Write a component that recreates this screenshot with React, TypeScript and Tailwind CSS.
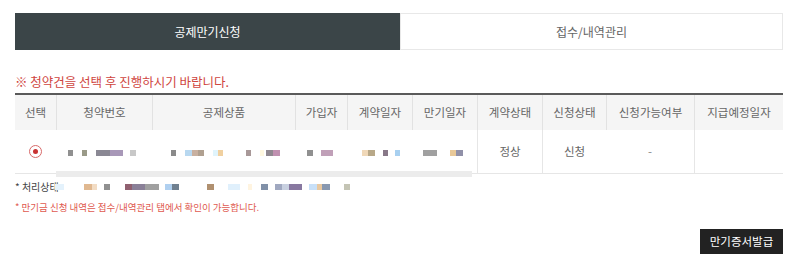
import React from "react";

const font = { fontFamily: '"Noto Sans CJK KR", "Noto Sans", sans-serif' };

const rowRects: [number, number, string][] = [
  [12, 5, "#909090"], [26, 5, "#9a9a88"], [40, 14, "#8a8894"], [54, 13, "#a898b8"],
  [74, 6, "#c8c8c8"], [115, 5, "#8a8a8a"], [129, 7, "#b8d8f0"], [136, 6, "#c8b0a0"],
  [142, 6, "#b0a090"], [157, 5, "#e0f4fc"], [162, 5, "#f0d0a0"], [190, 5, "#a89898"],
  [204, 4, "#fff8e0"], [210, 7, "#908890"], [217, 7, "#c090b0"], [251, 6, "#909090"],
  [265, 12, "#c0a0b8"], [306, 6, "#f0d8b8"], [312, 7, "#b8a888"], [327, 5, "#887888"],
  [339, 5, "#a8d0f0"], [367, 14, "#a0a0a0"], [394, 6, "#e8c898"], [400, 7, "#9090a8"],
];

const statusRects: [number, number, string][] = [
  [0, 9, "#e4f2fc"], [29, 8, "#e0b890"], [37, 5, "#f2dcc4"], [49, 6, "#909090"],
  [70, 7, "#906070"], [77, 13, "#8a8098"], [90, 14, "#a0a0a0"], [110, 7, "#b0d0f0"],
  [117, 7, "#708090"], [152, 7, "#b09070"], [173, 12, "#e0f0fc"], [193, 4, "#fff4e0"],
  [206, 7, "#8090a8"], [220, 7, "#a0a8c0"], [227, 7, "#c8d0e0"], [234, 13, "#8878a0"],
  [254, 8, "#c8e0f8"], [262, 5, "#e8c8a0"], [267, 8, "#8898b0"], [289, 6, "#c4c4b4"],
];

const headers: [string, string][] = [
  ["선택", "w-[41px]"],
  ["청약번호", "w-[96px]"],
  ["공제상품", "w-[143px]"],
  ["가입자", "w-[52px]"],
  ["계약일자", "w-[65px]"],
  ["만기일자", "w-[65px]"],
  ["계약상태", "w-[65px]"],
  ["신청상태", "w-[64px]"],
  ["신청가능여부", "w-[88px]"],
  ["지급예정일자", "w-[89px]"],
];

export default function App() {
  return (
    <div className="w-[800px] h-[272px] bg-white pt-[13px] pl-[15px]" style={font}>
      <div className="w-[768px]">
        {/* Tabs */}
        <div className="flex h-[37px]">
          <div className="w-[385px] bg-[#3b4548] text-white text-[12px] flex items-center justify-center">
            공제만기신청
          </div>
          <div className="flex-1 border border-[#e8e8e8] text-[#666] text-[12px] flex items-center justify-center">
            접수/내역관리
          </div>
        </div>

        <div className="mt-[23px] h-[18px] leading-[18px] text-[12.5px] text-[#cf4540]">
          ※ 청약건을 선택 후 진행하시기 바랍니다.
        </div>

        {/* Table */}
        <div className="mt-[2px] border-t-2 border-[#5a5a5a]">
          <div className="flex h-[35px] bg-[#f5f5f5]">
            {headers.map(([t, w], i) => (
              <div
                key={t}
                className={`${w} flex items-center justify-center text-[11.5px] text-[#666] ${i > 0 ? "border-l border-[#e2e2e2]" : ""}`}
              >
                {t}
              </div>
            ))}
          </div>
          <div className="flex items-start h-[44px]">
            <div className="w-[41px] h-[44px] border-b border-[#e6e6e6] flex items-center justify-center">
              <div className="w-[13px] h-[13px] rounded-full border border-[#d86a6a] flex items-center justify-center">
                <div className="w-[5px] h-[5px] rounded-full bg-[#c83232]" />
              </div>
            </div>
            <div className="w-[416px] h-[47px] flex flex-col">
              <div className="h-[41px] bg-white">
                <svg width="416" height="41" className="block">
                  {rowRects.map(([x, w, c], i) => (
                    <rect key={i} x={x} y={20} width={w} height={6} fill={c} />
                  ))}
                </svg>
              </div>
              <div className="h-[6px] bg-[#ececec]" />
            </div>
            <div className="w-[5px] h-[44px] border-b border-[#e6e6e6]" />
            <div className="w-[65px] h-[44px] border-b border-l border-[#e6e6e6] flex items-center justify-center text-[11.5px] text-[#666]">
              정상
            </div>
            <div className="w-[64px] h-[44px] border-b border-l border-[#e6e6e6] flex items-center justify-center text-[11.5px] text-[#666]">
              신청
            </div>
            <div className="w-[88px] h-[44px] border-b border-[#e6e6e6] flex items-center justify-center text-[11.5px] text-[#888]">
              -
            </div>
            <div className="w-[89px] h-[44px] border-b border-l border-[#e6e6e6]" />
          </div>
        </div>

        <div className="mt-[6px] h-[14px] flex items-center">
          <span className="shrink-0 text-[10px] leading-[14px] text-[#444] whitespace-nowrap">* 처리상태</span>
          <svg width="300" height="14" className="block shrink-0 ml-[-4px]">
            {statusRects.map(([x, w, c], i) => (
              <rect key={i} x={x} y={4} width={w} height={6} fill={c} />
            ))}
          </svg>
        </div>

        <div className="mt-[6px] h-[14px] leading-[14px] text-[9.5px] text-[#e05a50]">
          * 만기금 신청 내역은 접수/내역관리 탭에서 확인이 가능합니다.
        </div>

        <div className="mt-[15px] flex justify-end">
          <div className="w-[83px] h-[25px] bg-[#222] text-white text-[11.5px] flex items-center justify-center">
            만기증서발급
          </div>
        </div>
      </div>
    </div>
  );
}
